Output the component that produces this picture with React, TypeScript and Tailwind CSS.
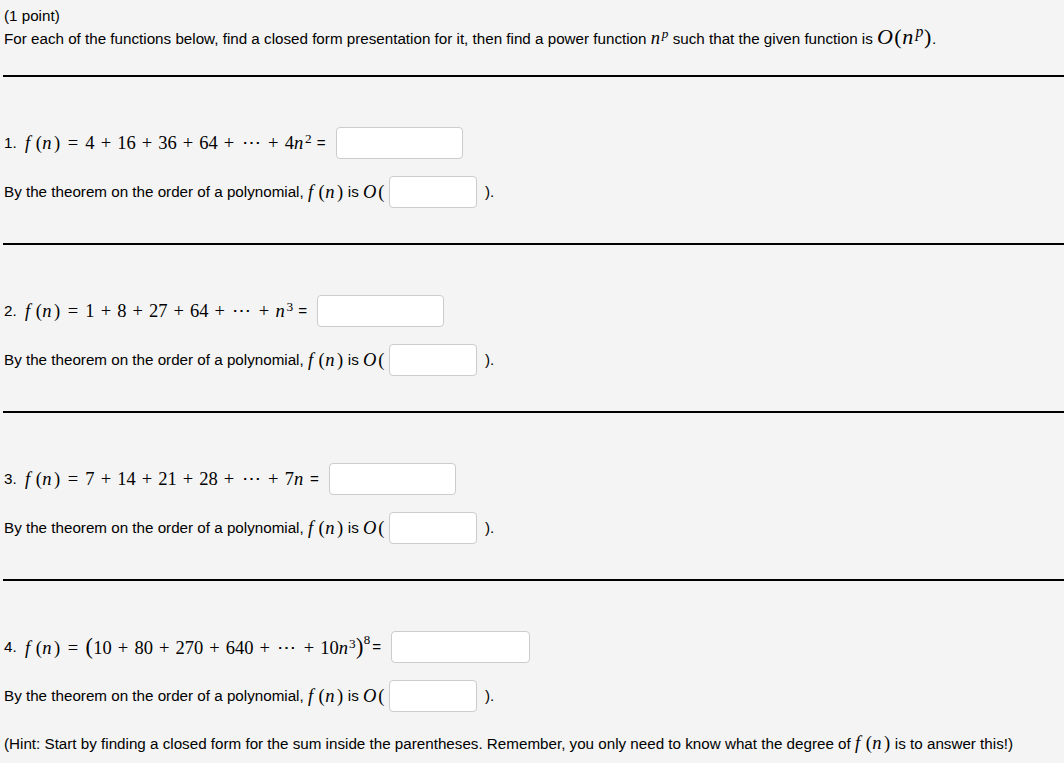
import React from "react";

// math pieces, sized in em so they follow the TeX metrics of the reference
const V = ({ children, w }: { children: React.ReactNode; w: string }) => (
  <span className={`inline-block italic ${w}`}>{children}</span>
);
const P = ({ children }: { children: React.ReactNode }) => (
  <span className="inline-block w-[0.389em] text-center">{children}</span>
);
const Op = () => (
  <span className="inline-block w-[0.778em] mx-[0.222em] text-center">+</span>
);
const Eq = () => (
  <span className="inline-block w-[0.778em] mx-[0.278em] text-center">=</span>
);
const Dots = () => (
  <span className="inline-block w-[1.172em] text-center">⋯</span>
);
const Sup = ({ children }: { children: React.ReactNode }) => (
  <span className="inline-block relative -top-[0.42em] text-[0.72em] leading-none">
    {children}
  </span>
);

const Math = ({
  children,
  size = "text-[18.5px]",
}: {
  children: React.ReactNode;
  size?: string;
}) => (
  <span
    className={`font-['Liberation_Serif',serif] ${size} leading-none whitespace-nowrap`}
  >
    {children}
  </span>
);

const Fn = () => (
  <>
    <V w="w-[0.55em]">f</V>
    <P>(</P>
    <V w="w-[0.6em]">n</V>
    <P>)</P>
  </>
);

function OrderRow() {
  return (
    <div className="flex items-center h-[32px] mt-[17px]">
      <span>By the theorem on the order of a polynomial,&nbsp;</span>
      <Math>
        <Fn />
      </Math>
      <span>&nbsp;is&nbsp;</span>
      <Math>
        <V w="w-[0.8em]">O</V>
        <P>(</P>
      </Math>
      <span className="ml-[4px] h-[32px] w-[88px] bg-white border border-[#cccccc] rounded-[4px]" />
      <span className="ml-[8px]">).</span>
    </div>
  );
}

function Rule() {
  return <div className="-ml-px h-[2px] bg-black" />;
}

function EqRow({
  num,
  boxW,
  gap = "ml-[5px]",
  children,
}: {
  num: string;
  boxW: string;
  gap?: string;
  children: React.ReactNode;
}) {
  return (
    <div className="flex items-center h-[32px] mt-[50px]">
      <span className="w-[21px]">{num}</span>
      <Math>
        <Fn />
        <Eq />
        {children}
      </Math>
      <span className={`${gap} mr-[10px]`}>=</span>
      <span className={`h-[32px] ${boxW} bg-white border border-[#cccccc] rounded-[4px]`} />
    </div>
  );
}

export default function App() {
  return (
    <div className="min-h-screen bg-[#f4f4f4] text-black font-['Liberation_Sans',Arial,sans-serif] text-[15.2px] leading-[20px] pl-[4px] pt-[6px] overflow-hidden">
      <div className="h-[20px]">(1 point)</div>
      <div className="h-[20px] whitespace-nowrap">
        For each of the functions below, find a closed form presentation for it,
        then find a power function{" "}
        <Math>
          <V w="w-[0.6em]">n</V>
          <Sup>
            <span className="italic">p</span>
          </Sup>
        </Math>{" "}
        such that the given function is{" "}
        <Math size="text-[22px]">
          <V w="w-[0.76em]">O</V>
          <P>(</P>
          <V w="w-[0.6em]">n</V>
          <Sup>
            <span className="italic">p</span>
          </Sup>
          <P>)</P>
        </Math>
        .
      </div>

      <div className="mt-[29px]">
        <Rule />
        <EqRow num="1." boxW="w-[127px]">
          4<Op />16<Op />36<Op />64<Op />
          <Dots />
          <Op />4<V w="w-[0.6em]">n</V>
          <Sup>2</Sup>
        </EqRow>
        <OrderRow />
        <div className="h-[35px]" />

        <Rule />
        <EqRow num="2." boxW="w-[127px]">
          1<Op />8<Op />27<Op />64<Op />
          <Dots />
          <Op />
          <V w="w-[0.6em]">n</V>
          <Sup>3</Sup>
        </EqRow>
        <OrderRow />
        <div className="h-[35px]" />

        <Rule />
        <EqRow num="3." boxW="w-[127px]">
          7<Op />14<Op />21<Op />28<Op />
          <Dots />
          <Op />7<V w="w-[0.6em]">n</V>
        </EqRow>
        <OrderRow />
        <div className="h-[35px]" />

        <Rule />
        <EqRow num="4." boxW="w-[139px]" gap="ml-[2px]">
          <span className="inline-block w-[0.36em] text-center text-[1.2em] leading-none">(</span>
          10<Op />80<Op />270<Op />640<Op />
          <Dots />
          <Op />10<V w="w-[0.55em]">n</V>
          <Sup>3</Sup>
          <span className="inline-block w-[0.36em] text-center text-[1.2em] leading-none">)</span>
          <span className="inline-block relative -top-[0.75em] text-[0.7em] leading-none">8</span>
        </EqRow>
        <OrderRow />
        <div className="mt-[22px]">
          (Hint: Start by finding a closed form for the sum inside the
          parentheses. Remember, you only need to know what the degree of{" "}
          <Math>
            <Fn />
          </Math>{" "}
          is to answer this!)
        </div>
      </div>
    </div>
  );
}
